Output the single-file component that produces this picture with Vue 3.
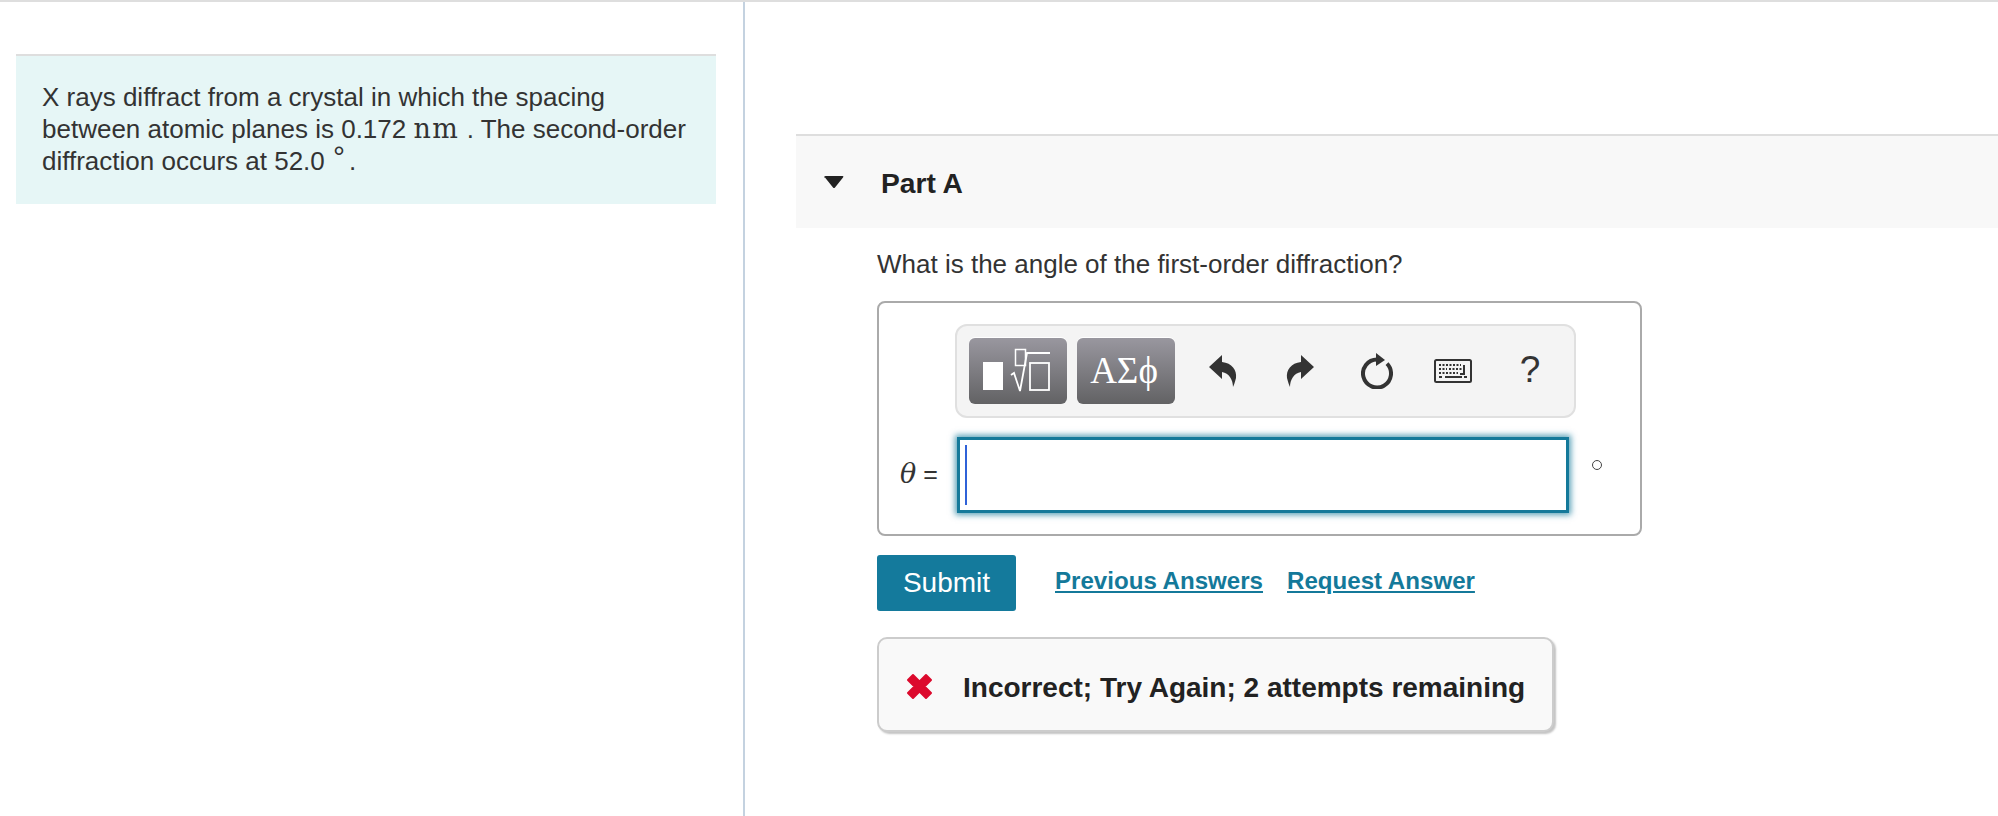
<template>
  <div class="page">
    <aside class="left">
      <div class="intro">
        X rays diffract from a crystal in which the spacing<br />
        between atomic planes is 0.172 <span class="unit">nm</span> . The second-order<br />
        diffraction occurs at 52.0 <span class="deg">°</span>.
      </div>
    </aside>
    <main class="right">
      <header class="part">
        <svg class="caret" width="20" height="12" viewBox="0 0 20 12"><path d="M0 1.500Q0 0 1.500 0H18.500Q20 0 19 1.500L11 11.500Q10 12.500 9 11.500L1 1.500Z" fill="#222" /></svg>
        <h2>Part A</h2>
      </header>
      <section class="body">
        <p class="q">What is the angle of the first-order diffraction?</p>
        <div class="answer">
          <div class="toolbar">
            <button class="tpl">
              <svg width="98" height="66" viewBox="0 0 98 66">
                <rect x="14" y="24" width="20" height="28" fill="#fff" />
                <rect x="46.500" y="11.500" width="10" height="16" fill="none" stroke="#fff" stroke-width="1.500" />
                <path d="M42 37l3-2 6 18 7-38h23" fill="none" stroke="#fff" stroke-width="1.800" />
                <rect x="61" y="25" width="19" height="27" fill="none" stroke="#fff" stroke-width="1.800" />
              </svg>
            </button>
            <button class="tpl sym">ΑΣϕ</button>
            <div class="tools">
              <span class="tool">
                <svg width="28" height="32" viewBox="0 0 28 32"><path d="M0 12L13 0V7C23 8 28 15 27 23C26 27 25 30 24 32C24 25 20 18 13 17V24Z" fill="#333" /></svg>
              </span>
              <span class="tool">
                <svg width="28" height="32" viewBox="0 0 28 32"><path d="M28 12L15 0V7C5 8 0 15 1 23C2 27 3 30 4 32C4 25 8 18 15 17V24Z" fill="#333" /></svg>
              </span>
              <span class="tool">
                <svg width="32" height="36" viewBox="0 0 32 36">
                  <path d="M16 6.500A14 14 0 1 0 26 10.700" fill="none" stroke="#333" stroke-width="4" />
                  <path d="M15 0L24 7L15 13Z" fill="#333" />
                </svg>
              </span>
              <span class="tool">
                <svg width="38" height="24" viewBox="0 0 38 24">
                  <rect x="1" y="1" width="36" height="22" rx="1.500" fill="none" stroke="#333" stroke-width="2" />
                  <path d="M5 6h22" stroke="#333" stroke-width="2" stroke-dasharray="2 1.500" fill="none" />
                  <path d="M5 10h8M15 10h14" stroke="#333" stroke-width="2" stroke-dasharray="2 1.500" fill="none" />
                  <path d="M5 14h19" stroke="#333" stroke-width="2" stroke-dasharray="2 1.500" fill="none" />
                  <path d="M30 6v9h-4M5 18h3M11 18h17M30 18h3" stroke="#333" stroke-width="2" fill="none" />
                </svg>
              </span>
              <span class="tool help">?</span>
            </div>
          </div>
          <div class="field-row">
            <label class="lbl"><i>θ</i> <span>=</span></label>
            <div class="field"><span class="cursor"></span></div>
            <span class="ring"></span>
          </div>
        </div>
        <div class="actions">
          <button class="submit">Submit</button>
          <a class="link first">Previous Answers</a>
          <a class="link">Request Answer</a>
        </div>
        <div class="feedback">
          <svg width="27" height="27" viewBox="0 0 27 27"><path d="M2 7L7 2L13.500 8.500L20 2L25 7L18.500 13.500L25 20L20 25L13.500 18.500L7 25L2 20L8.500 13.500Z" fill="#dc0a2d" stroke="#dc0a2d" stroke-width="2" stroke-linejoin="round" /></svg>
          <strong>Incorrect; Try Again; 2 attempts remaining</strong>
        </div>
      </section>
    </main>
  </div>
</template>

<script setup>
</script>

<style>
html, body { margin: 0; background: #fff; }
</style>

<style scoped>
.page {
  display: flex;
  width: 1998px;
  height: 816px;
  overflow: hidden;
  box-sizing: border-box;
  border-top: 2px solid #dedede;
  font-family: "Liberation Sans", Arial, sans-serif;
  color: #333;
  background: #fff;
}
.left {
  width: 745px;
  flex: none;
  box-sizing: border-box;
  border-right: 2px solid #c4d2e0;
  padding: 52px 27px 0 16px;
}
.intro {
  box-sizing: border-box;
  height: 150px;
  border-top: 2px solid #dedede;
  background: #e6f6f6;
  padding: 25px 26px 0;
  font-size: 26px;
  line-height: 32px;
}
.unit { font-family: "DejaVu Serif", serif; font-size: 27px; letter-spacing: 1.500px; line-height: 1; }
.deg { font-size: 30px; position: relative; top: -3px; margin: 0 4px 0 1px; line-height: 1; }
.right { flex: 1; padding: 132px 0 0 51px; min-width: 0; }
.part {
  box-sizing: border-box;
  height: 94px;
  border-top: 2px solid #dedede;
  background: #f8f8f8;
  display: flex;
  align-items: center;
  padding-left: 28px;
}
.caret { margin-right: 37px; }
.part h2 { margin: 2px 0 0 0; font-size: 28.200px; font-weight: 700; color: #222; }
.body { padding-left: 81px; }
.q { margin: 20px 0 21px; font-size: 26px; line-height: 32px; }
.answer {
  box-sizing: border-box;
  width: 765px;
  height: 235px;
  border: 2px solid #aaa;
  border-radius: 8px;
  padding-top: 21px;
}
.toolbar {
  box-sizing: border-box;
  width: 621px;
  height: 94px;
  margin-left: 76px;
  border: 2px solid #e0e0e0;
  border-radius: 12px;
  background: #f4f4f4;
  display: flex;
  align-items: center;
  padding-left: 12px;
  gap: 10px;
}
.tpl {
  flex: none;
  width: 98px;
  height: 66px;
  padding: 0;
  border: 0;
  border-radius: 6px;
  background: linear-gradient(#99979f, #626264);
  box-shadow: 0 -1px 0 #fff;
  display: flex;
  align-items: center;
  justify-content: center;
}
.tpl svg { display: block; }
.sym {
  color: #fff;
  font-family: "Liberation Serif", serif;
  font-size: 37px;
  padding: 0 4px 2px 0;
  box-sizing: border-box;
}
.tools { display: flex; flex: none; }
.tool {
  width: 76.700px;
  height: 90px;
  display: flex;
  align-items: center;
  justify-content: center;
}
.help { font-size: 37px; color: #333; padding-bottom: 3px; box-sizing: border-box; }
.field-row { display: flex; align-items: center; margin-top: 19px; }
.lbl { flex: none; width: 78px; box-sizing: border-box; padding: 0 0 4px 21px; font-size: 25px; white-space: nowrap; }
.lbl i { font-family: "DejaVu Serif", serif; font-size: 27px; }
.field {
  flex: none;
  box-sizing: border-box;
  width: 612px;
  height: 76px;
  border: 3px solid #14799a;
  box-shadow: 0 0 6px 2px rgba(20, 121, 154, 0.7);
  background: #fff;
  padding: 5px;
  display: flex;
}
.cursor { width: 2px; height: 60px; background: #2f62d8; }
.ring {
  flex: none;
  width: 10px;
  height: 10px;
  box-sizing: border-box;
  border: 1.500px solid #444;
  border-radius: 50%;
  margin: -20px 0 0 23px;
}
.actions { display: flex; align-items: flex-start; margin-top: 19px; }
.submit {
  width: 139px;
  height: 56px;
  padding: 0;
  border: 0;
  border-radius: 3px;
  background: #147a9c;
  color: #fff;
  font-family: inherit;
  font-size: 28px;
}
.link {
  color: #14799a;
  font-size: 24.100px;
  font-weight: 700;
  line-height: 52px;
  text-decoration: underline;
  margin-left: 24px;
}
.link.first { margin-left: 39px; }
.feedback {
  box-sizing: border-box;
  width: 677px;
  height: 95px;
  margin-top: 26px;
  border: 2px solid #ccc;
  border-radius: 10px;
  background: #f9f9f9;
  box-shadow: 2px 2px 2px #c4c4c4;
  display: flex;
  align-items: center;
  padding-left: 27px;
  gap: 30px;
}
.feedback svg { margin-top: 3px; }
.feedback strong { font-size: 28px; color: #222; white-space: nowrap; margin-top: 6px; }
</style>
